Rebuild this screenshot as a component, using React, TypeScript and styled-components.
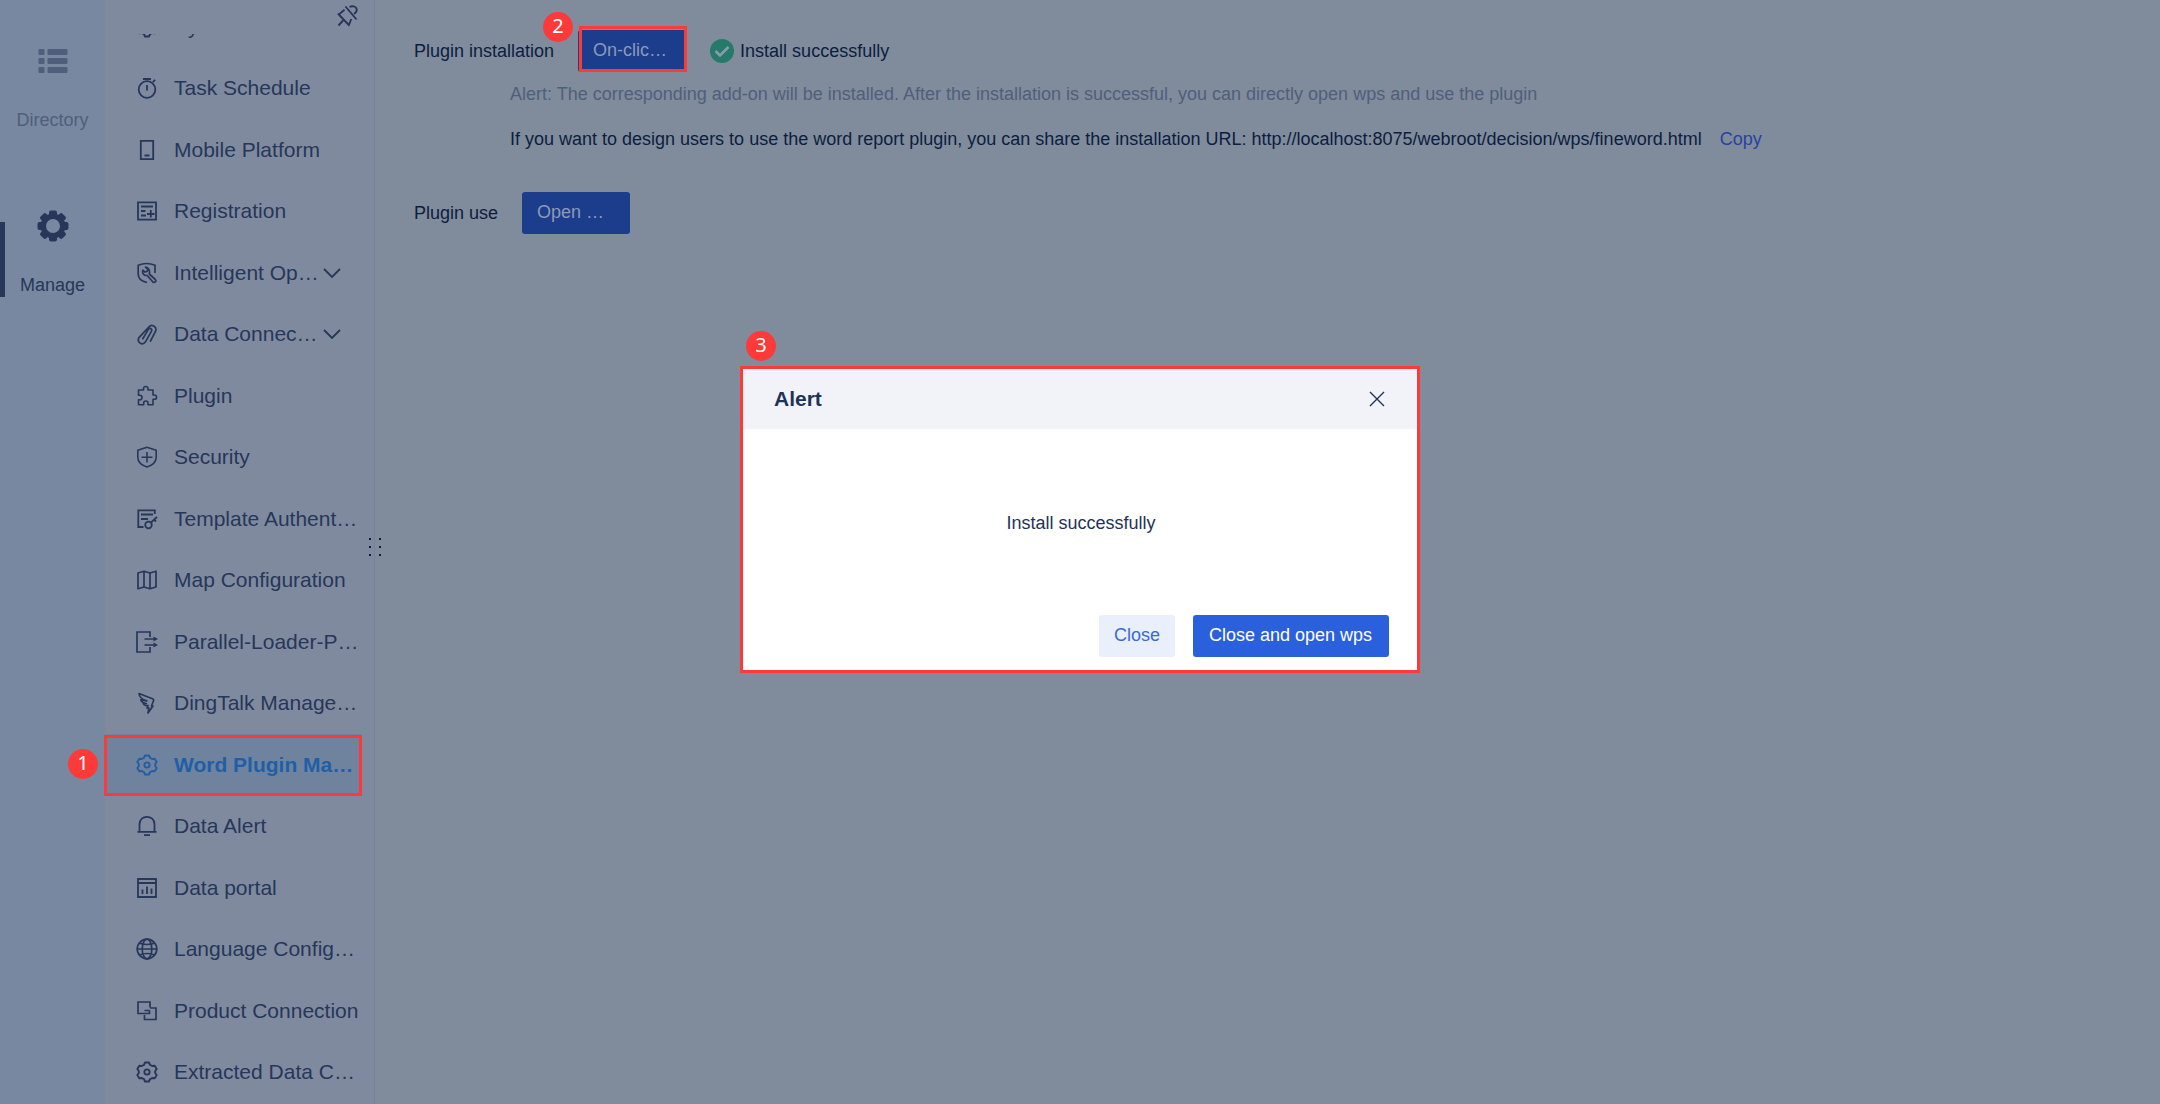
import React from "react";
import styled, { createGlobalStyle, css } from "styled-components";

const color = {
  rail: "#7888a0",
  side: "#808a9f",
  main: "#808b9c",
  line: "#7284a0",
  ink: "#263759",
  strong: "#0c1e40",
  faint: "#4f5f7b",
  active: "#1f5fa6",
  activeBg: "#6f839f",
  mark: "#fc3a3a",
};

const GlobalStyle = createGlobalStyle`
  * { box-sizing: border-box; }
  body {
    margin: 0;
    overflow: hidden;
    background: ${color.main};
    color: ${color.strong};
    font: 18px/24px "Liberation Sans", Arial, sans-serif;
  }
  button { font: inherit; color: inherit; border: 0; padding: 0; background: none; cursor: pointer; }
  ul { list-style: none; margin: 0; padding: 0; }
  p, h2 { margin: 0; }
  svg { display: block; flex: none; }
`;

const Page = styled.div`
  display: flex;
  height: 100vh;
`;

const Rail = styled.nav`
  flex: none;
  width: 105px;
  background: ${color.rail};
  padding-top: 40px;
  display: flex;
  flex-direction: column;
  gap: 33px;
`;

const RailItem = styled.button<{ $active?: boolean }>`
  position: relative;
  height: 132px;
  padding-bottom: 40px;
  display: flex;
  flex-direction: column;
  align-items: center;
  justify-content: space-between;
  color: ${(p) => (p.$active ? color.ink : color.faint)};

  ${(p) =>
    p.$active &&
    css`
      &::before {
        content: "";
        position: absolute;
        left: 0;
        top: 17px;
        width: 5px;
        height: 75px;
        background: ${color.ink};
      }
    `}
`;

const RailIcon = styled.span`
  height: 42px;
  display: flex;
  align-items: center;
`;

const Side = styled.aside`
  position: relative;
  flex: none;
  width: 270px;
  background: ${color.side};
  border-right: 1px solid ${color.line};
  display: flex;
  flex-direction: column;
  color: ${color.ink};
`;

const SideTop = styled.div`
  flex: none;
  height: 34px;
  padding: 4px 14px 0 0;
  display: flex;
  justify-content: flex-end;
  align-items: flex-start;
`;

const Scroller = styled.div`
  flex: 1;
  min-height: 0;
  clip-path: inset(0 0 0 -60px);
`;

const Menu = styled.ul`
  margin-top: -38px;
`;

const MenuItem = styled.li`
  position: relative;
  height: 61px;
  &:nth-child(even) {
    height: 62px;
  }
`;

const MenuButton = styled.button<{ $active?: boolean }>`
  width: 256px;
  height: 100%;
  padding-left: 31px;
  display: flex;
  align-items: center;
  font-size: 21px;
  text-align: left;
  white-space: nowrap;
  ${(p) =>
    p.$active &&
    css`
      background: ${color.activeBg};
      color: ${color.active};
      font-weight: bold;
    `}
`;

const MenuLabel = styled.span<{ $branch?: boolean }>`
  margin-left: 16px;
  width: ${(p) => (p.$branch ? "148px" : "auto")};
`;

const Grip = styled.span`
  position: absolute;
  z-index: 1;
  right: -7px;
  top: 538px;
  display: grid;
  grid-template-columns: 2px 2px;
  gap: 6px 8px;
`;

const Dot = styled.i`
  height: 2px;
  background: ${color.strong};
`;

const Frame = styled.span<{ $inset: string }>`
  position: absolute;
  inset: ${(p) => p.$inset};
  border: 3px solid ${color.mark};
  pointer-events: none;
`;

const Badge = styled.span<{ $left: number; $top: number }>`
  position: absolute;
  left: ${(p) => p.$left}px;
  top: ${(p) => p.$top}px;
  width: 30px;
  height: 30px;
  border-radius: 50%;
  background: ${color.mark};
  color: #fff;
  font: 20px/28px "Noto Sans", "Open Sans", sans-serif;
  text-align: center;
`;

const Main = styled.main`
  flex: 1;
  min-width: 0;
  padding: 30px 39px;
  display: flex;
  flex-direction: column;
`;

const Row = styled.div`
  display: flex;
  align-items: center;
  gap: 24px;
  height: 42px;
`;

const Note = styled.div`
  margin: 10px 0 0 96px;
  color: ${color.faint};
`;

const Share = styled.div`
  display: flex;
  gap: 18px;
  margin: 21px 0 41px 96px;
`;

const CopyLink = styled.a`
  color: #26439f;
  text-decoration: none;
`;

const Status = styled.span`
  display: flex;
  align-items: center;
  gap: 6px;
`;

const Marked = styled.span`
  position: relative;
  display: flex;
`;

const Button = styled.button<{ $kind: "dim" | "soft" | "primary" }>`
  height: 42px;
  padding: 0 15px 2px;
  border-radius: 3px;
  text-align: left;
  white-space: nowrap;
  ${(p) =>
    p.$kind === "dim" &&
    css`
      width: 108px;
      background: #1b3d8c;
      color: #8c9ab4;
    `}
  ${(p) =>
    p.$kind === "soft" &&
    css`
      background: #e9effb;
      color: #3a68dc;
    `}
  ${(p) =>
    p.$kind === "primary" &&
    css`
      padding: 0 16px 2px;
      min-width: 196px;
      background: #2b60dc;
      color: #fff;
    `}
`;

const Overlay = styled.div`
  position: fixed;
  inset: 0;
  z-index: 2;
  padding-bottom: 65px;
  display: flex;
  align-items: center;
  justify-content: center;
`;

const Dialog = styled.section`
  position: relative;
  width: 680px;
  border: 3px solid ${color.mark};
  background: #fff;
  color: #1f3358;
`;

const DialogHead = styled.header`
  height: 60px;
  padding: 0 32px 0 31px;
  display: flex;
  align-items: center;
  justify-content: space-between;
  background: #f2f3f8;
`;

const DialogTitle = styled.h2`
  font-size: 21px;
  line-height: 24px;
`;

const DialogBody = styled.p`
  padding: 82px 0 80px 2px;
  text-align: center;
`;

const DialogFoot = styled.footer`
  display: flex;
  justify-content: flex-end;
  gap: 18px;
  padding: 0 28px 13px;
`;

const Svg = ({ size = 22, w = 1.6, children }: { size?: number; w?: number; children: React.ReactNode }) => (
  <svg
    width={size}
    height={size}
    viewBox={`0 0 ${size} ${size}`}
    fill="none"
    stroke="currentColor"
    strokeWidth={w}
    aria-hidden="true"
  >
    {children}
  </svg>
);

const Cog = () => (
  <Svg w={1.9}>
    <path
      strokeLinejoin="round"
      d="M9 1.500h4l1 2.300 2.200 1.200 2.500-.3 2 3.300-1.500 2v2l1.500 2-2 3.300-2.500-.3-2.200 1.200-1 2.300H9l-1-2.300L5.800 17l-2.500.3-2-3.300 1.500-2v-2l-1.500-2 2-3.300 2.500.3L8 3.800z"
    />
    <circle cx="11" cy="11" r="2.600" />
  </Svg>
);

const icons: Record<string, React.ReactNode> = {
  system: <Cog />,
  timer: (
    <Svg w={1.8}>
      <circle cx="11" cy="12.500" r="8.300" />
      <path d="M7 2h8M11 8v5.500M16.800 5.200l2.400-2.400" />
    </Svg>
  ),
  phone: (
    <Svg w={1.8}>
      <path d="M4.800 1.800h12.400v18.400H4.800zM8.500 16.500h5" />
    </Svg>
  ),
  form: (
    <Svg w={1.8}>
      <path d="M2 2.300h18v17.400H2zM5 6.500h12M5 11h4.500M5 15.500h5M11 14h7.500M14.800 10v7.500" />
    </Svg>
  ),
  wrench: (
    <Svg w={1.7}>
      <path d="M19 11V3.200C13 .8 8 .8 2.200 3.200V12c0 4.500 3 7.400 8.800 8.500" />
      <path
        strokeLinejoin="round"
        d="M9.500 5.200l2.300 1.900-.6 2.300-2.400.6-2-1.800c-.8 2.800.8 5.600 4.400 5.300l5.500 6.300c1.800 1.600 4-.6 2.600-2.300l-6-5.500c.9-3.800-1-6.500-3.800-6.800z"
      />
    </Svg>
  ),
  clip: (
    <Svg w={1.7}>
      <path
        strokeLinecap="round"
        d="M14.500 18l5-9.500c2-5-4-8.500-7.200-4L2.800 14.800c-2.300 5 3.900 8 6.700 4l6-10.600c1-2.500-2-3.800-3.300-1.600l-5.400 9.200"
      />
    </Svg>
  ),
  puzzle: (
    <Svg w={1.6}>
      <path
        strokeLinejoin="round"
        d="M2.500 5h5V3.700c0-3 4.500-3 4.500 0V5h5v5h1.300c3 0 3 4.300 0 4.300H17v5.500h-5V18c0-2.700-4.300-2.700-4.300 0v1.800H2.500v-5h1.300c3 0 3-4.600 0-4.600H2.500z"
      />
    </Svg>
  ),
  shield: (
    <Svg w={1.6}>
      <path strokeLinejoin="round" d="M11 1.300l9.200 3v7c0 5-4 8-9.200 9.700C5.800 19.300 1.800 16.300 1.800 11.300v-7zM11 6v10.500M5.500 11.200h11" />
    </Svg>
  ),
  auth: (
    <Svg w={1.8}>
      <path d="M7.500 19H2.300V2.300h16.500V6M5 6.500h12M5 11h7" />
      <circle cx="12.500" cy="17" r="3.300" />
      <path d="M15 14.500L21 9M18 11.500l2 2" />
    </Svg>
  ),
  map: (
    <Svg w={1.7}>
      <path strokeLinejoin="round" d="M2 4l6-1.800L14 4l6-1.800V18l-6 1.800L8 18l-6 1.800zM8 2.200V18M14 4v15.800" />
    </Svg>
  ),
  loader: (
    <Svg w={1.7}>
      <path d="M14 6V1H1v20h13v-5M8.500 8H20M8.500 14H20" />
      <path fill="currentColor" stroke="none" d="M17.500 5.500l4.500 2.500-4.500 2.500zM17.500 11.500l4.500 2.500-4.500 2.500z" />
    </Svg>
  ),
  ding: (
    <Svg w={1.7}>
      <path
        strokeLinejoin="round"
        d="M3 1.500l13.500 5.300c1 .4 1.300 1.200.9 2.200L15.500 14H17l-5 7 .9-5H11l1-2.500c-2.700.3-4.200-.5-4.700-1.800l3-.2C7 11 5.200 9.800 4.800 7.800l6 1C6 7.500 3.300 5 3 1.500z"
      />
    </Svg>
  ),
  cog: <Cog />,
  bell: (
    <Svg w={1.8}>
      <path d="M3.500 16.500V9.300c0-10 15-10 15 0v7.200M1.500 16.800h19M8 20.200h6" />
    </Svg>
  ),
  portal: (
    <Svg w={1.8}>
      <path d="M2 2h18v18H2zM2 6h18M6.500 17v-4.500M11 17V9.500M15.500 17v-5.500" />
    </Svg>
  ),
  globe: (
    <Svg w={1.7}>
      <circle cx="11" cy="11" r="9.800" />
      <ellipse cx="11" cy="11" rx="4.800" ry="9.800" />
      <path d="M1.200 11h19.600M3.500 5c4 2 11 2 15 0M3.500 17c4-2 11-2 15 0" />
    </Svg>
  ),
  link: (
    <Svg w={1.7}>
      <path d="M7.500 13.500H2V2h12v5.500M13.500 10.500v3H10M14 8h6v11.500H8.500V15M7.500 13.500H10M8.500 10.500h5" />
    </Svg>
  ),
};

const menu: { icon: string; label: string; branch?: boolean; active?: boolean }[] = [
  { icon: "system", label: "System" },
  { icon: "timer", label: "Task Schedule" },
  { icon: "phone", label: "Mobile Platform" },
  { icon: "form", label: "Registration" },
  { icon: "wrench", label: "Intelligent Op…", branch: true },
  { icon: "clip", label: "Data Connec…", branch: true },
  { icon: "puzzle", label: "Plugin" },
  { icon: "shield", label: "Security" },
  { icon: "auth", label: "Template Authent…" },
  { icon: "map", label: "Map Configuration" },
  { icon: "loader", label: "Parallel-Loader-P…" },
  { icon: "ding", label: "DingTalk Manage…" },
  { icon: "cog", label: "Word Plugin Ma…", active: true },
  { icon: "bell", label: "Data Alert" },
  { icon: "portal", label: "Data portal" },
  { icon: "globe", label: "Language Config…" },
  { icon: "link", label: "Product Connection" },
  { icon: "cog", label: "Extracted Data C…" },
];

export default function App() {
  return (
    <>
      <GlobalStyle />
      <Page>
        <Rail>
          <RailItem>
            <RailIcon>
              <svg width="30" height="24" viewBox="0 0 30 24" fill="currentColor" aria-hidden="true">
                {[0, 9, 18].map((y) => (
                  <g key={y}>
                    <rect x="0.500" y={y} width="6" height="6" rx="1" />
                    <rect x="9.500" y={y} width="20" height="6" rx="1" />
                  </g>
                ))}
              </svg>
            </RailIcon>
            Directory
          </RailItem>
          <RailItem $active>
            <RailIcon>
              <svg width="32" height="32" viewBox="-16 -16 32 32" aria-hidden="true">
                {[0, 45, 90, 135].map((a) => (
                  <rect key={a} x="-4" y="-15.500" width="8" height="31" rx="2" fill="currentColor" transform={`rotate(${a})`} />
                ))}
                <circle r="12.500" fill="currentColor" />
                <circle r="7" fill={color.rail} />
              </svg>
            </RailIcon>
            Manage
          </RailItem>
        </Rail>

        <Side>
          <SideTop>
            <button aria-label="Unpin menu">
              <Svg size={24} w={1.9}>
                <path d="M9.500 2.500L20.500 15.500M8.500 5.800L2.800 10.500 12.800 21 15.300 15M2 9.500L4 12M2.500 21.500l4.500-5M13.500 3c3-1.500 6-.500 7 1.500.8 2-.5 4-2.500 5.500" />
              </Svg>
            </button>
          </SideTop>
          <Scroller>
            <Menu>
              {menu.map((m) => (
                <MenuItem key={m.label}>
                  <MenuButton $active={m.active}>
                    {icons[m.icon]}
                    <MenuLabel $branch={m.branch}>{m.label}</MenuLabel>
                    {m.branch && (
                      <Svg size={20} w={1.8}>
                        <path d="M2 6l8 8 8-8" />
                      </Svg>
                    )}
                  </MenuButton>
                  {m.active && (
                    <>
                      <Frame $inset="1px 12px -1px -1px" />
                      <Badge $left={-37} $top={15}>1</Badge>
                    </>
                  )}
                </MenuItem>
              ))}
            </Menu>
          </Scroller>
          <Grip>
            {[0, 1, 2, 3, 4, 5].map((n) => (
              <Dot key={n} />
            ))}
          </Grip>
        </Side>

        <Main>
          <Row>
            <span>Plugin installation</span>
            <Marked>
              <Button $kind="dim">On-clic…</Button>
              <Frame $inset="-4px -1px 0 1px" />
              <Badge $left={-35} $top={-18}>2</Badge>
            </Marked>
            <Status>
              <svg width="24" height="24" viewBox="0 0 24 24" fill="none" aria-hidden="true">
                <circle cx="12" cy="12" r="12" fill="#257a69" />
                <path d="M5.500 12l4.500 4.500 8.500-8.500" stroke="#8c9ab0" strokeWidth="2.500" />
              </svg>
              Install successfully
            </Status>
          </Row>
          <Note>
            Alert: The corresponding add-on will be installed. After the installation is successful, you can directly
            open wps and use the plugin
          </Note>
          <Share>
            <span>
              If you want to design users to use the word report plugin, you can share the installation URL:
              http://localhost:8075/webroot/decision/wps/fineword.html
            </span>
            <CopyLink href="#copy">Copy</CopyLink>
          </Share>
          <Row>
            <span>Plugin use</span>
            <Button $kind="dim">Open …</Button>
          </Row>
        </Main>
      </Page>

      <Overlay>
        <Dialog role="dialog" aria-labelledby="dialog-title">
          <DialogHead>
            <DialogTitle id="dialog-title">Alert</DialogTitle>
            <button aria-label="Close dialog">
              <Svg size={16} w={1.4}>
                <path d="M1 1l14 14M15 1L1 15" />
              </Svg>
            </button>
          </DialogHead>
          <DialogBody>Install successfully</DialogBody>
          <DialogFoot>
            <Button $kind="soft">Close</Button>
            <Button $kind="primary">Close and open wps</Button>
          </DialogFoot>
          <Badge $left={3} $top={-38}>3</Badge>
        </Dialog>
      </Overlay>
    </>
  );
}
